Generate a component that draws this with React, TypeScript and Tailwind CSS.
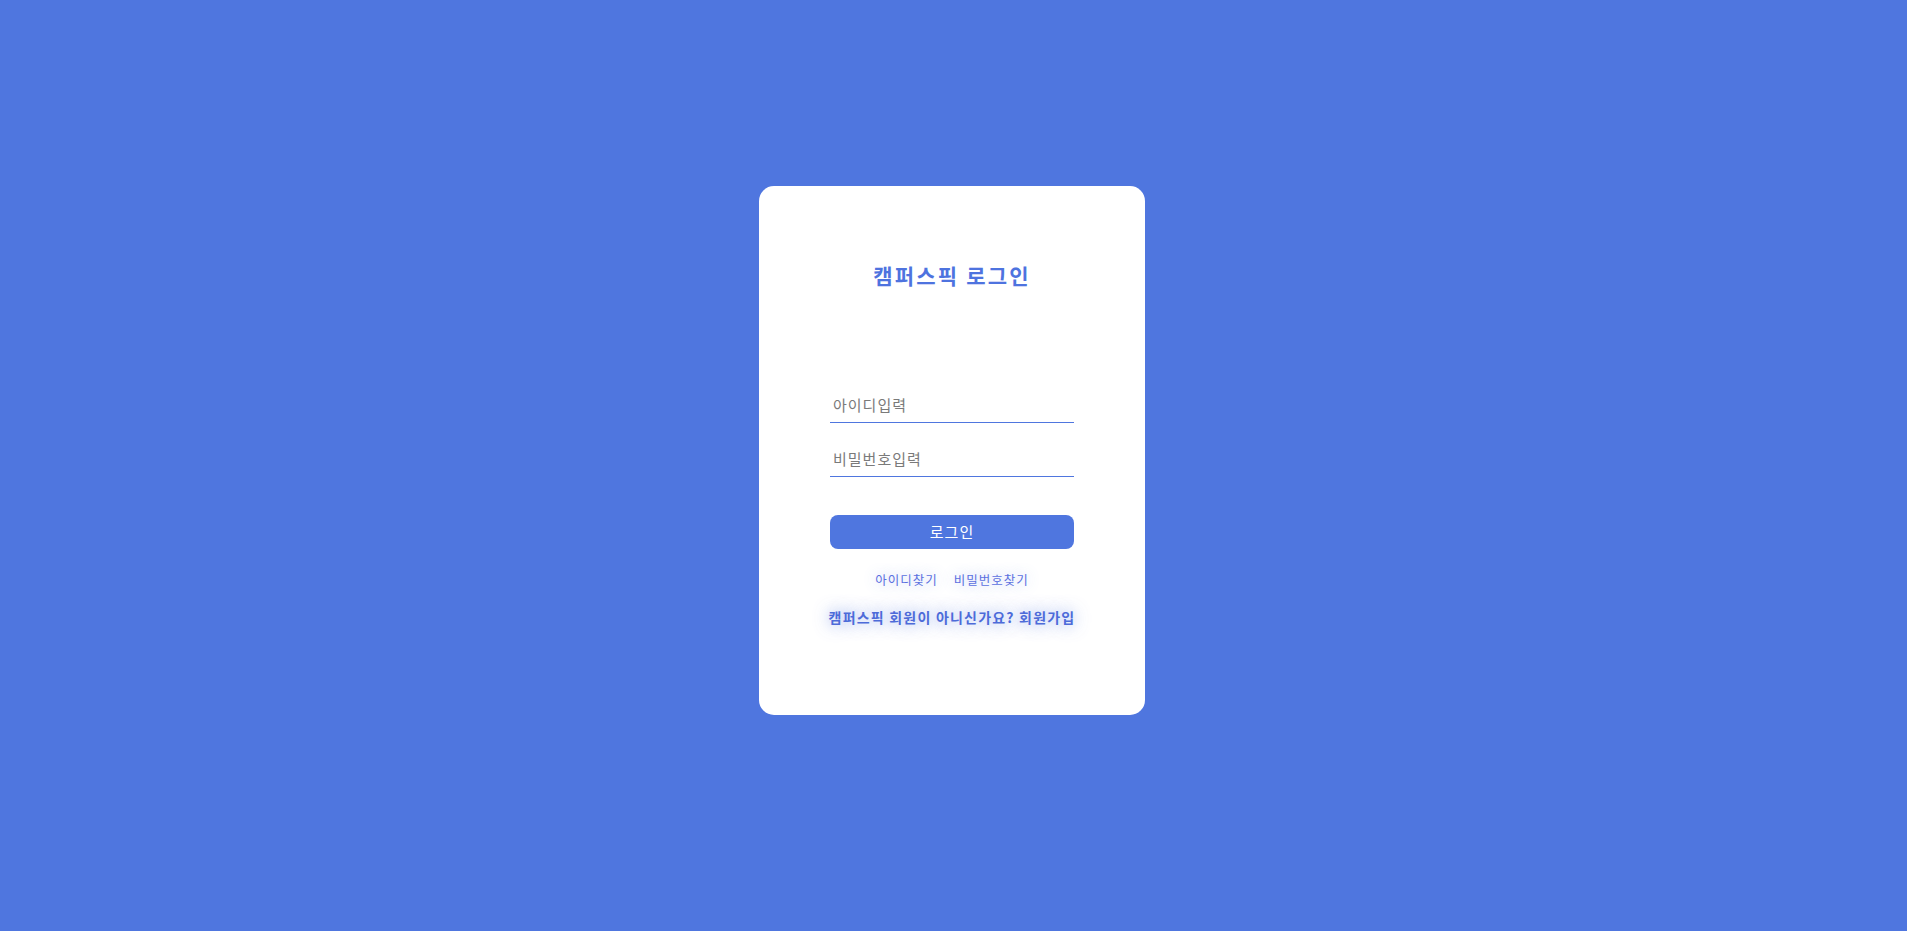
const App = () => {
  return (
    <div
      className="min-h-screen w-full bg-[#4f76df] flex items-center justify-center pb-[30px] pr-[3px]"
      style={{ fontFamily: '"Noto Sans CJK KR", "Noto Sans", sans-serif' }}
    >
      <div className="w-[386px] h-[529px] bg-white rounded-[15px] flex flex-col items-center pt-[74px]">
        <h1 className="text-[21px] leading-[30px] font-bold tracking-[2.2px] text-[#4e73df]">캠퍼스픽 로그인</h1>

        <form className="w-[244px] flex flex-col mt-[97px]">
          <input
            className="h-[36px] w-full border-b border-[#4f76df] px-[3px] text-[15px] tracking-[1px] text-gray-700 placeholder:text-[#7a7a7a] outline-none"
            type="text"
            placeholder="아이디입력"
          />
          <input
            className="h-[36px] w-full border-b border-[#4f76df] px-[3px] mt-[18px] text-[15px] tracking-[1px] text-gray-700 placeholder:text-[#7a7a7a] outline-none"
            type="password"
            placeholder="비밀번호입력"
          />
          <button
            type="button"
            className="mt-[38px] h-[34px] w-full rounded-[8px] bg-[#4f76df] text-white text-[15px] tracking-[1px]"
          >
            로그인
          </button>
        </form>

        <div className="mt-[22px] flex gap-[16px] text-[12.5px] leading-[18px] tracking-[1px] text-[#5b70e0] [text-shadow:0_0_14px_rgba(79,118,223,0.45)]">
          <span>아이디찾기</span>
          <span>비밀번호찾기</span>
        </div>

        <p className="mt-[18px] text-[14px] leading-[20px] font-semibold tracking-[1.2px] text-[#4d6bd9] [text-shadow:0_0_16px_rgba(79,118,223,0.7)]">
          캠퍼스픽 회원이 아니신가요? 회원가입
        </p>
      </div>
    </div>
  );
};

export default App;
